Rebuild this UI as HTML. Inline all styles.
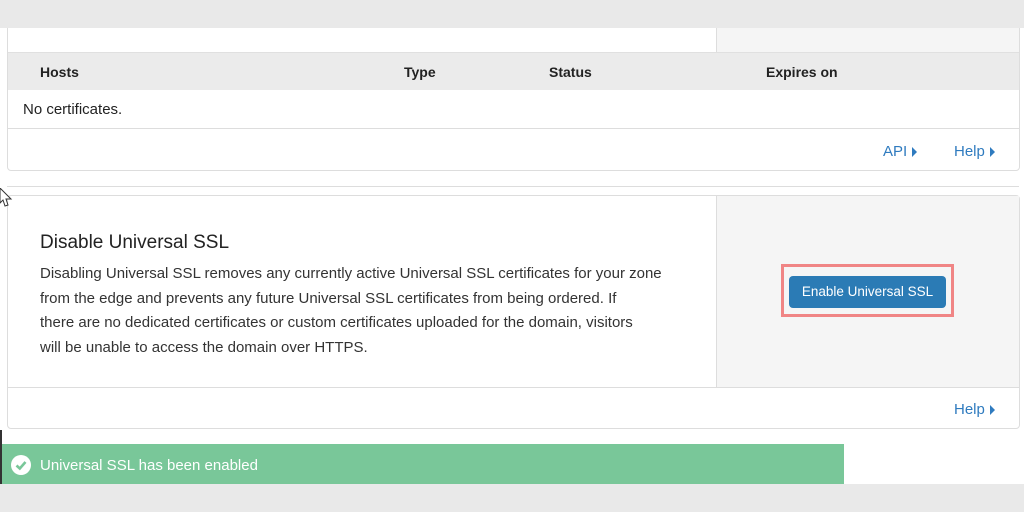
<!DOCTYPE html>
<html><head><meta charset="utf-8"><style>
*{margin:0;padding:0;box-sizing:border-box}
body{width:1024px;height:512px;position:relative;background:#fff;font-family:"Liberation Sans",sans-serif;overflow:hidden;color:#222}
.a{position:absolute}
.lnk{color:#2f7bbf;font-size:15px}
.tri{display:inline-block;width:0;height:0;border-top:5px solid transparent;border-bottom:5px solid transparent;border-left:5px solid #2f7bbf;margin-left:5px;vertical-align:middle}
</style></head><body>
<!-- card1 -->
<div class="a" style="left:7px;top:20px;width:1013px;height:151px;border:1px solid #ddd;border-radius:4px;background:#fff"></div>
<div class="a" style="left:716px;top:28px;width:303px;height:24px;background:#f5f5f5;border-left:1px solid #ddd"></div>
<div class="a" style="left:8px;top:52px;width:1011px;height:38px;background:#ebebeb;border-top:1px solid #e0e0e0"></div>
<div class="a" style="left:40px;top:64px;font-size:14px;font-weight:bold">Hosts</div>
<div class="a" style="left:404px;top:64px;font-size:14px;font-weight:bold">Type</div>
<div class="a" style="left:549px;top:64px;font-size:14px;font-weight:bold">Status</div>
<div class="a" style="left:766px;top:64px;font-size:14px;font-weight:bold">Expires on</div>
<div class="a" style="left:23px;top:101px;font-size:15px">No certificates.</div>
<div class="a" style="left:8px;top:128px;width:1011px;height:1px;background:#ddd"></div>
<div class="a lnk" style="left:883px;top:143px">API<span class="tri"></span></div>
<div class="a lnk" style="left:954px;top:143px">Help<span class="tri"></span></div>
<div class="a" style="left:0;top:0;width:1024px;height:28px;background:#e9e9e9"></div>
<!-- separator -->
<div class="a" style="left:7px;top:186px;width:1012px;height:1px;background:#ddd"></div>
<!-- card2 -->
<div class="a" style="left:7px;top:195px;width:1013px;height:234px;border:1px solid #ddd;border-radius:4px;background:#fff"></div>
<div class="a" style="left:716px;top:196px;width:303px;height:191px;background:#f5f5f5;border-left:1px solid #ddd"></div>
<div class="a" style="left:8px;top:387px;width:1011px;height:1px;background:#ddd"></div>
<div class="a" style="left:40px;top:232px;font-size:19px;color:#222">Disable Universal SSL</div>
<div class="a" style="left:40px;top:262px;white-space:nowrap;font-size:15px;line-height:24.5px;color:#333">Disabling Universal SSL removes any currently active Universal SSL certificates for your zone<br>from the edge and prevents any future Universal SSL certificates from being ordered. If<br>there are no dedicated certificates or custom certificates uploaded for the domain, visitors<br>will be unable to access the domain over HTTPS.</div>
<div class="a" style="left:781px;top:264px;width:173px;height:53px;border:3px solid #f08585"></div>
<div class="a" style="left:789px;top:276px;width:157px;height:32px;background:#2b7bb5;border-radius:4px;color:#fff;font-size:13.5px;text-align:center;line-height:32px">Enable Universal SSL</div>
<div class="a lnk" style="left:954px;top:401px">Help<span class="tri"></span></div>
<!-- green -->
<div class="a" style="left:0;top:430px;width:2px;height:54px;background:#333"></div>
<div class="a" style="left:2px;top:444px;width:842px;height:40px;background:#79c799"></div>
<div class="a" style="left:11px;top:455px;width:20px;height:20px;border-radius:50%;background:#fff"></div>
<svg class="a" style="left:11px;top:455px" width="20" height="20"><path d="M5.5 10.5 L8.8 13.5 L14.5 7" stroke="#79c799" stroke-width="2.6" fill="none"/></svg>
<div class="a" style="left:40px;top:457px;font-size:15px;color:#fff">Universal SSL has been enabled</div>
<div class="a" style="left:0;top:484px;width:1024px;height:28px;background:#e9e9e9"></div>
<!-- cursor -->
<svg class="a" style="left:0;top:188px" width="14" height="24"><path d="M0 0 L11 11 L6 11 L8 17 L5 18 L3 12 L0 15 Z" fill="#fff" stroke="#333" stroke-width="1"/></svg>
</body></html>
